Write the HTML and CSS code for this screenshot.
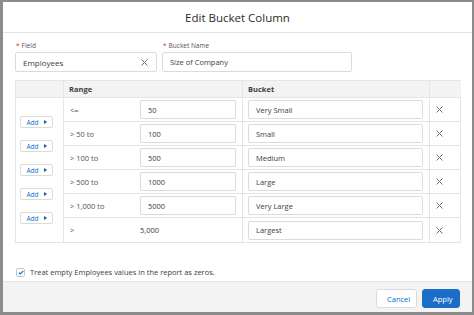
FILE: index.html
```html
<!DOCTYPE html>
<html lang="en">
<head>
    <meta charset="UTF-8">
    <title>Edit Bucket Column</title>
    <link rel="stylesheet" href="styles.css">
</head>
<body>
    <div class="modal">
        <div class="modal-header">
            <h1>Edit Bucket Column</h1>
        </div>

        <div class="modal-body">
            <div class="fields">
                <div class="field field-source">
                    <label><span class="req">*</span>Field</label>
                    <div class="input">
                        <span>Employees</span>
                        <svg class="x-icon" width="7" height="7" viewBox="0 0 7 7"><path d="M0.5 0.5 L6.5 6.5 M6.5 0.5 L0.5 6.5"/></svg>
                    </div>
                </div>
                <div class="field field-name">
                    <label><span class="req">*</span>Bucket Name</label>
                    <div class="input"><span>Size of Company</span></div>
                </div>
            </div>

            <div class="bucket-table">
                <div class="th"></div>
                <div class="th">Range</div>
                <div class="th">Bucket</div>
                <div class="th"></div>

                <div class="add-col">
                    <button class="add-btn">Add <span class="tri"></span></button>
                    <button class="add-btn">Add <span class="tri"></span></button>
                    <button class="add-btn">Add <span class="tri"></span></button>
                    <button class="add-btn">Add <span class="tri"></span></button>
                    <button class="add-btn">Add <span class="tri"></span></button>
                </div>

                <div class="td range"><span class="op">&lt;=</span><div class="cell-input">50</div></div>
                <div class="td bucket"><div class="cell-input">Very Small</div></div>
                <div class="td del"><svg class="x-icon" width="7" height="7" viewBox="0 0 7 7"><path d="M0.5 0.5 L6.5 6.5 M6.5 0.5 L0.5 6.5"/></svg></div>

                <div class="td range"><span class="op">&gt; 50 to</span><div class="cell-input">100</div></div>
                <div class="td bucket"><div class="cell-input">Small</div></div>
                <div class="td del"><svg class="x-icon" width="7" height="7" viewBox="0 0 7 7"><path d="M0.5 0.5 L6.5 6.5 M6.5 0.5 L0.5 6.5"/></svg></div>

                <div class="td range"><span class="op">&gt; 100 to</span><div class="cell-input">500</div></div>
                <div class="td bucket"><div class="cell-input">Medium</div></div>
                <div class="td del"><svg class="x-icon" width="7" height="7" viewBox="0 0 7 7"><path d="M0.5 0.5 L6.5 6.5 M6.5 0.5 L0.5 6.5"/></svg></div>

                <div class="td range"><span class="op">&gt; 500 to</span><div class="cell-input">1000</div></div>
                <div class="td bucket"><div class="cell-input">Large</div></div>
                <div class="td del"><svg class="x-icon" width="7" height="7" viewBox="0 0 7 7"><path d="M0.5 0.5 L6.5 6.5 M6.5 0.5 L0.5 6.5"/></svg></div>

                <div class="td range"><span class="op">&gt; 1,000 to</span><div class="cell-input">5000</div></div>
                <div class="td bucket"><div class="cell-input">Very Large</div></div>
                <div class="td del"><svg class="x-icon" width="7" height="7" viewBox="0 0 7 7"><path d="M0.5 0.5 L6.5 6.5 M6.5 0.5 L0.5 6.5"/></svg></div>

                <div class="td range last"><span class="op">&gt;</span><div class="cell-text">5,000</div></div>
                <div class="td bucket last"><div class="cell-input">Largest</div></div>
                <div class="td del last"><svg class="x-icon" width="7" height="7" viewBox="0 0 7 7"><path d="M0.5 0.5 L6.5 6.5 M6.5 0.5 L0.5 6.5"/></svg></div>
            </div>

            <div class="check-row">
                <span class="checkbox">
                    <svg width="6" height="5" viewBox="0 0 6 5"><path d="M0.7 2.6 L2.3 4 L5.3 0.8"/></svg>
                </span>
                <span>Treat empty Employees values in the report as zeros.</span>
            </div>
        </div>

        <div class="modal-footer">
            <button class="btn btn-neutral">Cancel</button>
            <button class="btn btn-brand">Apply</button>
        </div>
    </div>
</body>
</html>
```

FILE: styles.css
```css
* {
    margin: 0;
    padding: 0;
    box-sizing: border-box;
}

body {
    font-family: 'Open Sans', 'Noto Sans', Arial, sans-serif;
    background: #8c8c8c;
    padding: 2px 2px 3px 3px;
    width: 474px;
    height: 315px;
    color: #3e3e3c;
    font-size: 7.5px;
}

.modal {
    background: white;
    height: 310px;
    display: flex;
    flex-direction: column;
}

.modal-header {
    height: 31px;
    border-bottom: 1px solid #e5e5e5;
    display: flex;
    align-items: center;
    justify-content: center;
}

.modal-header h1 {
    font-size: 11.5px;
    font-weight: 400;
    color: #2b2b2b;
}

.modal-body {
    padding: 8px 0 0 12px;
}

.fields {
    display: flex;
    gap: 5px;
}

.field label {
    display: block;
    height: 10px;
    line-height: 10px;
    font-size: 6.5px;
    color: #54535a;
    margin-bottom: 1px;
    padding-left: 1px;
}

.req {
    color: #c23934;
    margin-right: 2px;
}

.field-source {
    width: 142px;
}

.field-name {
    width: 190px;
}

.input {
    height: 20px;
    border: 1px solid #dddbda;
    border-radius: 2px;
    display: flex;
    align-items: center;
    justify-content: space-between;
    padding: 0 8px 0 7px;
}

.field-source .input span {
    font-size: 8px;
}

.x-icon {
    stroke: #706e6b;
    stroke-width: 1;
    fill: none;
}

.bucket-table {
    margin-top: 8px;
    display: grid;
    grid-template-columns: 47px 179px 187px 32px;
    grid-template-rows: 17px repeat(6, 24px);
    width: 446px;
    border: 1px solid #e5e5e5;
}

.th {
    background: #f3f3f3;
    font-weight: 700;
    padding-left: 5px;
    display: flex;
    align-items: center;
    border-bottom: 1px solid #e5e5e5;
    border-left: 1px solid #e5e5e5;
}

.th:first-child {
    border-left: none;
}

.add-col {
    grid-column: 1;
    grid-row: 2 / 8;
    display: flex;
    flex-direction: column;
    gap: 12px;
    padding: 18px 0 0 4px;
}

.add-btn {
    width: 33px;
    height: 12px;
    background: white;
    border: 1px solid #dddbda;
    border-radius: 2px;
    color: #0070d2;
    font-family: inherit;
    font-size: 6.5px;
    display: flex;
    align-items: center;
    justify-content: center;
    gap: 5px;
}

.tri {
    width: 0;
    height: 0;
    border-top: 2.5px solid transparent;
    border-bottom: 2.5px solid transparent;
    border-left: 3.5px solid #0b5cab;
}

.td {
    border-left: 1px solid #e5e5e5;
    border-bottom: 1px solid #e5e5e5;
    display: flex;
    align-items: center;
}

.td.last {
    border-bottom: none;
}

.range {
    padding: 0 6px 0 6px;
}

.op {
    flex: 1;
    color: #514f4d;
}

.cell-input {
    height: 19px;
    border: 1px solid #dddbda;
    border-radius: 2px;
    display: flex;
    align-items: center;
    padding-left: 7px;
}

.range .cell-input {
    width: 96px;
}

.cell-text {
    width: 96px;
}

.bucket {
    padding: 0 6px 0 5px;
}

.bucket .cell-input {
    width: 176px;
}

.del {
    padding-left: 6px;
}

.check-row {
    margin-top: 24px;
    display: flex;
    align-items: center;
    gap: 5px;
    padding-left: 1px;
}

.checkbox {
    width: 9px;
    height: 9px;
    border: 1px solid #c9c7c5;
    border-radius: 2px;
    display: flex;
    align-items: center;
    justify-content: center;
}

.checkbox svg {
    stroke: #0070d2;
    stroke-width: 1.1;
    fill: none;
}

.modal-footer {
    margin-top: auto;
    height: 31px;
    background: #f3f3f3;
    border-top: 1px solid #e5e5e5;
    display: flex;
    justify-content: flex-end;
    align-items: flex-start;
    gap: 5px;
    padding: 7px 12px 0 0;
}

.btn {
    height: 19px;
    border-radius: 3px;
    font-family: inherit;
    font-size: 7.5px;
    padding: 0 10px;
}

.btn-neutral {
    background: white;
    border: 1px solid #dddbda;
    color: #0070d2;
    width: 41px;
}

.btn-brand {
    background: #1b6ec8;
    border: 1px solid #1b6ec8;
    color: white;
    width: 38px;
}
```
